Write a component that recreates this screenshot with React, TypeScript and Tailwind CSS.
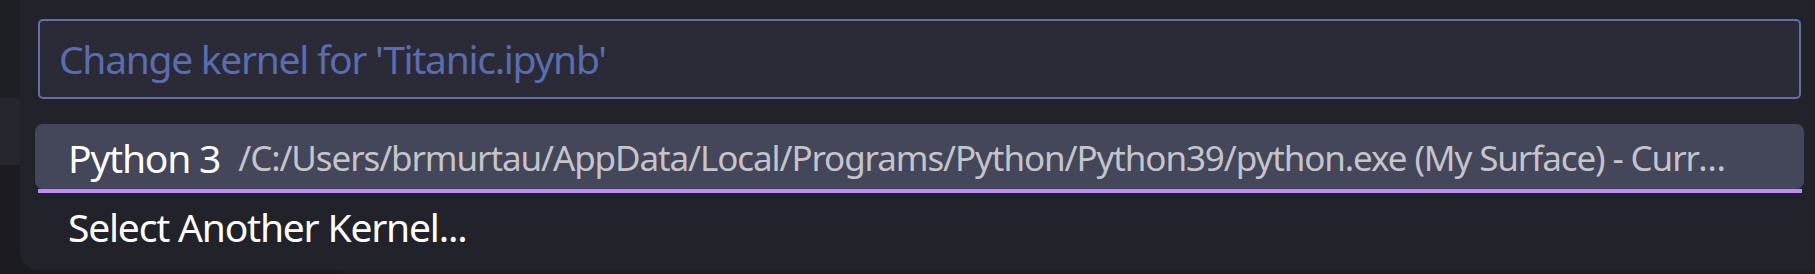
export default function App() {
  return (
    <div className="flex h-[274px] w-[1815px] flex-col overflow-hidden bg-[#1b1b21] font-['Noto_Sans',sans-serif]">
      <div className="flex h-[270px]">
        {/* app behind the overlay */}
        <div className="flex w-[20px] flex-col">
          <div className="h-[98px] bg-[#1e1e25]" />
          <div className="h-[67px] bg-[#26262e]" />
          <div className="flex-1 bg-[#1b1b21]" />
        </div>

        {/* quick pick */}
        <div className="flex flex-1 flex-col rounded-bl-[18px] bg-[#22222b] pt-[19px]">
          <div className="ml-[18px] flex h-[80px] w-[1763px] items-center rounded-[5px] border-2 border-[#6171a8] bg-[#2a2b37] pl-[19px]">
            <span className="text-[39px] tracking-[-1.3px] text-[#5a6db0]">Change kernel for 'Titanic.ipynb'</span>
          </div>

          <div className="ml-[15px] mt-[25px] flex w-[1769px] flex-col">
            <div className="flex h-[65px] items-center overflow-hidden rounded-[8px] bg-[#444659] pl-[33px] pr-[60px]">
              <span className="shrink-0 pt-[3px] text-[39px] tracking-[-1.2px] text-white">Python 3</span>
              <span className="ml-[18px] truncate pt-[3px] text-[35px] tracking-[-1.1px] text-[#c4c4cb]">
                /C:/Users/brmurtau/AppData/Local/Programs/Python/Python39/python.exe (My Surface) - Currently Selected
              </span>
            </div>
            <div className="ml-[3px] mr-[2px] h-[4px] bg-[#bc8df5]" />
            <div className="flex h-[64px] items-center pl-[33px]">
              <span className="pt-[4px] text-[39px] tracking-[-1.2px] text-white">Select Another Kernel...</span>
            </div>
          </div>
        </div>
      </div>
      <div className="flex h-[4px]">
        <div className="w-[343px] bg-[#1b1b21]" />
        <div className="flex-1 bg-[#1f1f27]" />
      </div>
    </div>
  );
}
